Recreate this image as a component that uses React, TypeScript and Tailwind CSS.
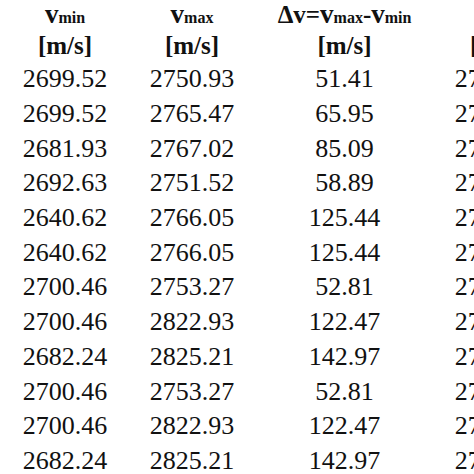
const rows = [
  ["2699.52", "2750.93", "51.41"],
  ["2699.52", "2765.47", "65.95"],
  ["2681.93", "2767.02", "85.09"],
  ["2692.63", "2751.52", "58.89"],
  ["2640.62", "2766.05", "125.44"],
  ["2640.62", "2766.05", "125.44"],
  ["2700.46", "2753.27", "52.81"],
  ["2700.46", "2822.93", "122.47"],
  ["2682.24", "2825.21", "142.97"],
  ["2700.46", "2753.27", "52.81"],
  ["2700.46", "2822.93", "122.47"],
  ["2682.24", "2825.21", "142.97"],
];

const cols = "grid grid-cols-[130px_124px_181px_124px] text-center";

function V({ sub }: { sub: string }) {
  return (
    <>
      <span className="font-bold text-[27px]">v</span>
      <span className="text-[16px] font-semibold">{sub}</span>
    </>
  );
}

export default function App() {
  return (
    <div
      className="h-[474px] w-[474px] overflow-hidden bg-white text-[#111]"
      style={{ fontFamily: '"Liberation Serif", serif' }}
    >
      <div className="w-[559px]">
        <div className={`${cols} h-[29px] items-center leading-none`}>
          <div><V sub="min" /></div>
          <div><V sub="max" /></div>
          <div>
            <span className="font-bold text-[25px]">Δv=</span>
            <V sub="max" />
            <span className="font-bold text-[25px]">-</span>
            <V sub="min" />
          </div>
          <div />
        </div>
        <div className={`${cols} h-[33px] items-center text-[25px] font-bold leading-none`}>
          <div>[m/s]</div>
          <div>[m/s]</div>
          <div>[m/s]</div>
          <div>[m/s]</div>
        </div>
        {rows.map((r, i) => (
          <div key={i} className={`${cols} h-[34.7px] items-center text-[26px] leading-none`}>
            <div>{r[0]}</div>
            <div>{r[1]}</div>
            <div>{r[2]}</div>
            <div>2750.93</div>
          </div>
        ))}
      </div>
    </div>
  );
}
